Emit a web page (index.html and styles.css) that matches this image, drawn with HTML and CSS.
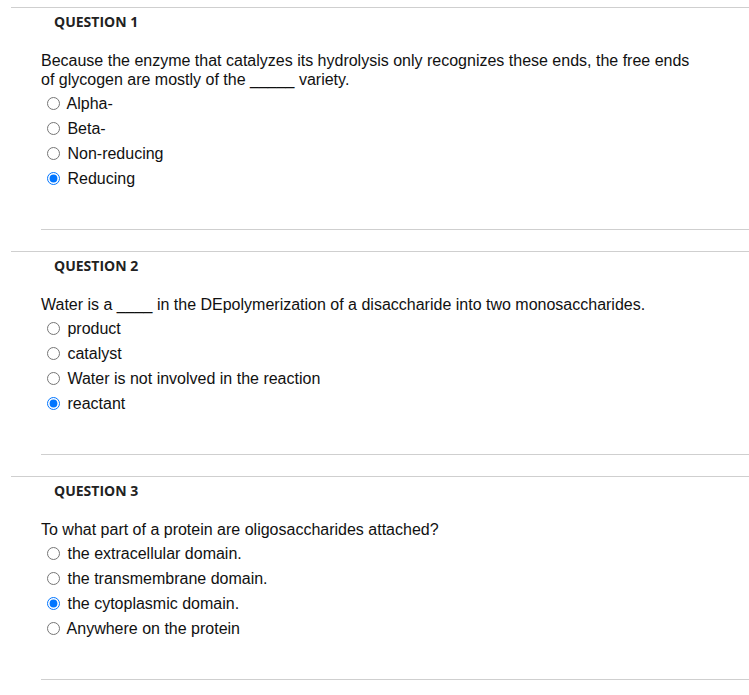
FILE: index.html
```html
<!DOCTYPE html>
<html>
<head>
<meta charset="utf-8">
<link rel="stylesheet" href="styles.css">
</head>
<body>
<div class="page">
  <section class="question">
    <h3 class="q-title">QUESTION 1</h3>
    <div class="q-body">
      <p class="q-text">Because the enzyme that catalyzes its hydrolysis only recognizes these ends, the free ends of glycogen are mostly of the _____ variety.</p>
      <ul class="options">
        <li class="option"><label><input type="radio" name="q1"> Alpha-</label></li>
        <li class="option"><label><input type="radio" name="q1"> Beta-</label></li>
        <li class="option"><label><input type="radio" name="q1"> Non-reducing</label></li>
        <li class="option"><label><input type="radio" name="q1" checked> Reducing</label></li>
      </ul>
      <hr class="q-end">
    </div>
  </section>
  <section class="question">
    <h3 class="q-title">QUESTION 2</h3>
    <div class="q-body">
      <p class="q-text">Water is a ____ in the DEpolymerization of a disaccharide into two monosaccharides.</p>
      <ul class="options">
        <li class="option"><label><input type="radio" name="q2"> product</label></li>
        <li class="option"><label><input type="radio" name="q2"> catalyst</label></li>
        <li class="option"><label><input type="radio" name="q2"> Water is not involved in the reaction</label></li>
        <li class="option"><label><input type="radio" name="q2" checked> reactant</label></li>
      </ul>
      <hr class="q-end">
    </div>
  </section>
  <section class="question">
    <h3 class="q-title">QUESTION 3</h3>
    <div class="q-body">
      <p class="q-text">To what part of a protein are oligosaccharides attached?</p>
      <ul class="options">
        <li class="option"><label><input type="radio" name="q3"> the extracellular domain.</label></li>
        <li class="option"><label><input type="radio" name="q3"> the transmembrane domain.</label></li>
        <li class="option"><label><input type="radio" name="q3" checked> the cytoplasmic domain.</label></li>
        <li class="option"><label><input type="radio" name="q3"> Anywhere on the protein</label></li>
      </ul>
      <hr class="q-end">
    </div>
  </section>
</div>
</body>
</html>
```

FILE: styles.css
```css
html, body {
  margin: 0;
  padding: 0;
  background: #fff;
}
.page {
  padding: 7px 0 0 11px;
  font-family: "Liberation Sans", Arial, sans-serif;
  font-size: 16px;
  color: #111;
}
.question {
  border-top: 1px solid #cfcfcf;
  margin-bottom: 21px;
}
.q-title {
  margin: 0;
  padding: 5px 0 0 43px;
  font-family: "Open Sans", sans-serif;
  font-weight: 700;
  font-size: 14px;
  line-height: 18px;
  color: #222;
}
.q-body {
  margin-left: 30px;
}
.q-text {
  margin: 20px 0 0;
  max-width: 665px;
  line-height: 19px;
}
.options {
  list-style: none;
  margin: 2px 0 0;
  padding: 0;
}
.option {
  height: 25px;
  line-height: 25px;
}
.option label {
  display: flex;
  align-items: center;
  white-space: pre;
}
.option input {
  margin: 0 3px 0 6px;
  width: 13px;
  height: 13px;
}
.q-end {
  margin: 38px 0 0;
  border: 0;
  border-top: 1px solid #cfcfcf;
  height: 0;
}
```
